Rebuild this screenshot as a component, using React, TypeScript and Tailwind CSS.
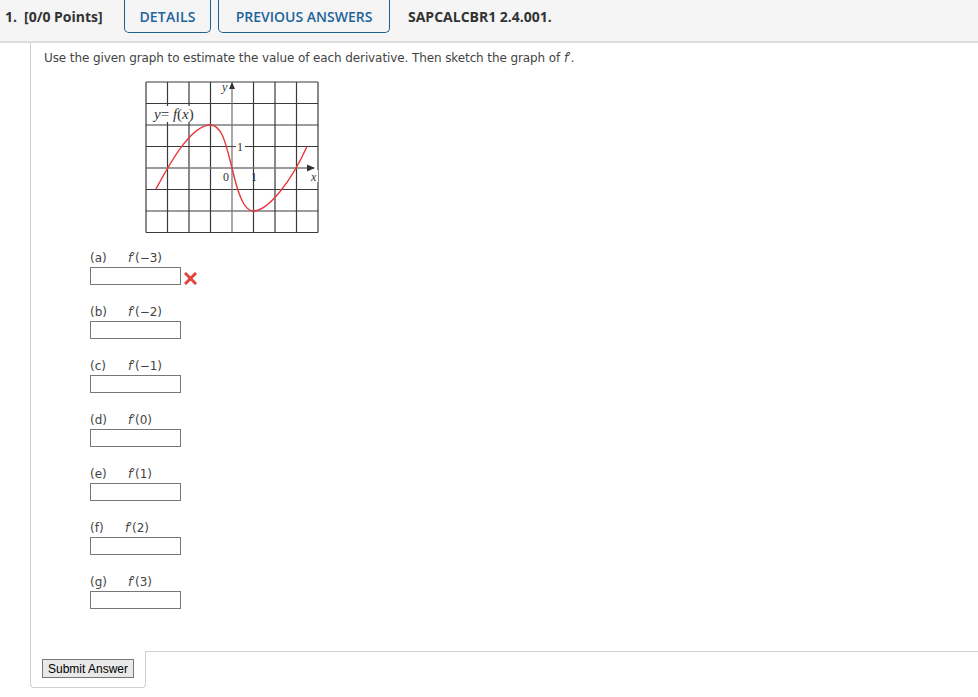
import React from 'react';

const parts = [
  { label: '(a)', arg: '−3', wrong: true },
  { label: '(b)', arg: '−2' },
  { label: '(c)', arg: '−1' },
  { label: '(d)', arg: '0' },
  { label: '(e)', arg: '1' },
  { label: '(f)', arg: '2' },
  { label: '(g)', arg: '3' },
];

// grid: 8 cols x 7 rows, origin at col 4 / row 4
const U = 21.5;
const W = U * 8;
const H = U * 7;

const Graph = () => {
  const cols = Array.from({ length: 9 }, (_, i) => i * U);
  const rows = Array.from({ length: 8 }, (_, i) => i * U);
  return (
    <svg width={W + 2} height={H + 2} viewBox={`-1 -1 ${W + 2} ${H + 2}`} className="block">
      {cols.map((x, i) =>
        i === 4 ? null : <line key={'c' + i} x1={x} y1={0} x2={x} y2={H} stroke="#3a3a3a" strokeWidth={1.2} />
      )}
      {rows.map((y, i) =>
        i === 4 ? null : <line key={'r' + i} x1={0} y1={y} x2={W} y2={y} stroke="#3a3a3a" strokeWidth={1.2} />
      )}
      {/* white behind labels */}
      <rect x={5} y={24} width={55} height={16} fill="#fff" />
      <rect x={90} y={57} width={9} height={14} fill="#fff" />
      <rect x={164} y={88} width={8} height={12} fill="#fff" />
      <rect x={74} y={1} width={9} height={10} fill="#fff" />
      {/* axes */}
      <line x1={0} y1={86} x2={168} y2={86} stroke="#7a7a7a" strokeWidth={1.3} />
      <line x1={86} y1={0} x2={86} y2={H} stroke="#7a7a7a" strokeWidth={1.3} />
      <path d="M86,0 L83,7 L89,7 Z" fill="#333" />
      <path d="M169,86 L161,82.5 L161,89.5 Z" fill="#333" />
      <line x1={83} y1={64.5} x2={89} y2={64.5} stroke="#555" strokeWidth={1.2} />
      <g fontFamily="'Liberation Serif', serif" fill="#333">
        <text x={76} y={9} fontSize={12} fontStyle="italic">y</text>
        <text x={8} y={37} fontSize={15}>
          <tspan fontStyle="italic">y</tspan>= <tspan fontStyle="italic">f</tspan>(<tspan fontStyle="italic">x</tspan>)
        </text>
        <text x={91} y={69} fontSize={12}>1</text>
        <text x={77} y={99} fontSize={12}>0</text>
        <text x={105} y={99} fontSize={12}>1</text>
        <text x={165} y={99} fontSize={12} fontStyle="italic">x</text>
      </g>
      <path
        d="M9.7,107.5 C22,85 44,43 64.5,43 C76,43 80,62 86,86 C92,112 98,129 107.5,129 C122,129 145,100 161,64.5"
        fill="none"
        stroke="#e8383d"
        strokeWidth={1.4}
      />
    </svg>
  );
};

const RedX = () => (
  <svg width="13" height="13" viewBox="0 0 13 13" className="ml-[3px] mt-[5px]">
    <path d="M2,2 L11,11 M11,2 L2,11" stroke="#e2453c" strokeWidth={3} strokeLinecap="square" />
  </svg>
);

export default function App() {
  return (
    <div className="min-h-[697px] bg-white font-['Open_Sans',sans-serif] text-[#333]">
      {/* header */}
      <div className="h-[43px] bg-[#f5f5f5] border-b-2 border-[#dedede] flex items-start">
        <div className="h-[33px] flex items-center pl-[5px] text-[14px] font-bold w-[124px]">
          <span>1.</span>
          <span className="ml-[7px]">[0/0 Points]</span>
        </div>
        <div className="h-[33px] w-[87px] border-x border-b border-[#1f5f8f] rounded-b-[5px] flex items-center justify-center text-[14px] font-semibold text-[#22649a] tracking-[0.2px]">
          DETAILS
        </div>
        <div className="h-[33px] w-[172px] ml-[7px] border-x border-b border-[#1f5f8f] rounded-b-[5px] flex items-center justify-center text-[14px] font-semibold text-[#22649a]">
          PREVIOUS ANSWERS
        </div>
        <div className="h-[33px] flex items-center ml-[18px] text-[14px] font-bold">SAPCALCBR1 2.4.001.</div>
      </div>

      {/* question body */}
      <div className="ml-[30px] border-l border-[#cfcfcf] h-[608px] pt-[7px] font-['DejaVu_Sans',sans-serif] text-[12px] text-[#444]">
        <p className="pl-[13px] leading-[16px] tracking-[-0.1px]">
          Use the given graph to estimate the value of each derivative. Then sketch the graph of{' '}
          <i>f</i>&prime;.
        </p>
        <div className="mt-[15px] ml-[114px]">
          <Graph />
        </div>
        <div className="mt-[16px] pl-[59px]">
          {parts.map((p) => (
            <div key={p.label} className="h-[54px]">
              <div className="leading-[16px] flex">
                <span className="w-[38px]">{p.label}</span>
                <span className={p.label === '(f)' ? '-ml-[3px]' : ''}>
                  <i>f</i>&prime;({p.arg})
                </span>
              </div>
              <div className="flex mt-[1px]">
                <div className="w-[91px] h-[18px] border border-[#777] bg-white" />
                {p.wrong && <RedX />}
              </div>
            </div>
          ))}
        </div>
      </div>

      {/* submit row */}
      <div className="ml-[30px] flex">
        <div className="w-[116px] h-[37px] border-l border-r border-b border-[#cfcfcf] rounded-b-[4px] pl-[11px] pt-[8px]">
          <button className="block h-[19px] w-[92px] border border-[#767676] bg-[#e9e9e9] font-['Liberation_Sans',sans-serif] text-[12px] text-black leading-none">
            Submit Answer
          </button>
        </div>
        <div className="flex-1 border-t border-[#cfcfcf]" />
      </div>
    </div>
  );
}
